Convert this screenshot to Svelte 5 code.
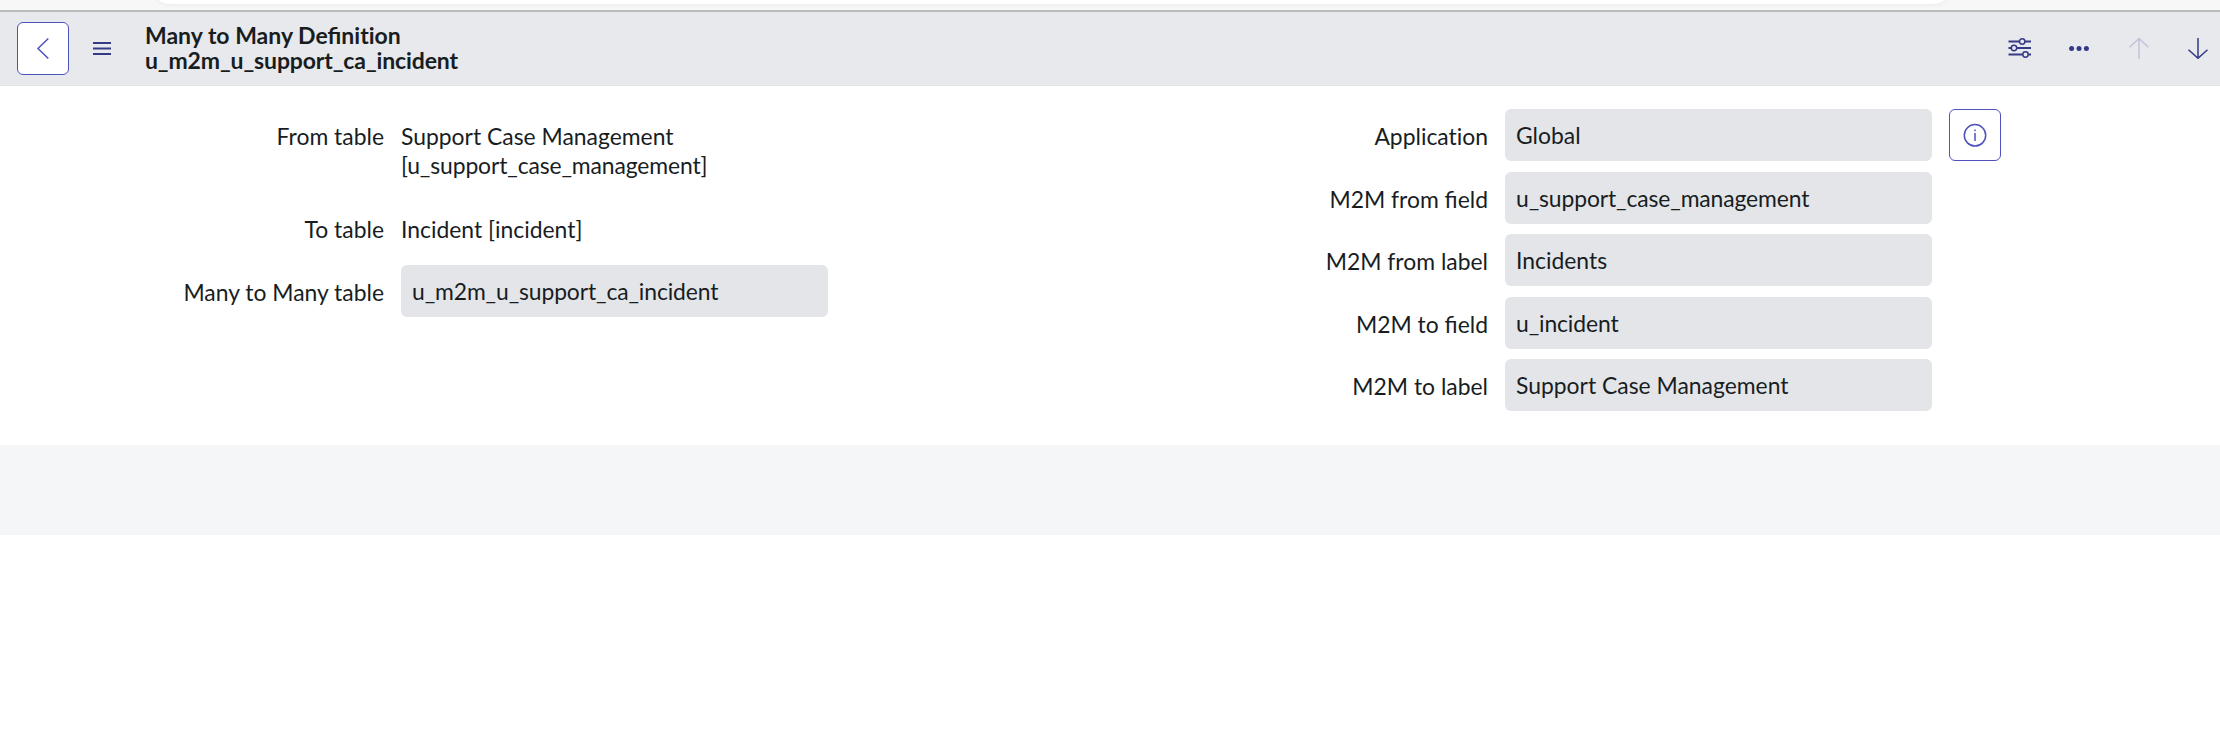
<script>
	let record = $state({
		name: 'u_m2m_u_support_ca_incident'
	});

	// Fields of the left form column
	const fromFields = [
		{ label: 'From table', lines: ['Support Case Management', '[u_support_case_management]'] },
		{ label: 'To table', lines: ['Incident [incident]'] },
		{ label: 'Many to Many table', value: 'u_m2m_u_support_ca_incident' }
	];

	// Fields of the right form column
	const m2mFields = [
		{ label: 'Application', value: 'Global', info: true },
		{ label: 'M2M from field', value: 'u_support_case_management' },
		{ label: 'M2M from label', value: 'Incidents' },
		{ label: 'M2M to field', value: 'u_incident' },
		{ label: 'M2M to label', value: 'Support Case Management' }
	];

	// Column and table names are set slightly tighter
	const isName = (text) => text.includes('_');
</script>

<div class="page">
	<div class="browser-edge">
		<div class="address-bar"></div>
	</div>

	<header class="form-header">
		<button class="btn-icon" aria-label="Back">
			<svg width="52" height="53" viewBox="0 0 52 53">
				<path d="M31.3 16.5 21 26.5l10.3 10" />
			</svg>
		</button>
		<button class="btn-plain menu" aria-label="Additional actions">
			<svg width="18" height="13" viewBox="0 0 18 13">
				<path d="M0 1h18M0 6.500h18M0 12h18" stroke-width="2" />
			</svg>
		</button>
		<h1 class="title">
			<span>Many to Many Defi<span class="no-liga">nition</span></span>
			<span class="name">{record.name}</span>
		</h1>
		<div class="actions">
			<button class="btn-plain" aria-label="Personalize form">
				<svg width="24" height="22" viewBox="0 0 24 22">
					<path d="M.5 4.500h10.800M17 4.500h6M.5 11h3M9 11h14M.5 17.500h14M20.500 17.500h2.500" stroke-width="1.900" />
					<circle cx="14.200" cy="4.500" r="2.700" />
					<circle cx="6" cy="11" r="2.700" />
					<circle cx="17.500" cy="17.500" r="2.700" />
				</svg>
			</button>
			<button class="btn-plain" aria-label="More options">
				<svg width="24" height="22" viewBox="0 0 24 22">
					<g class="dots">
						<circle cx="4.600" cy="11.500" r="2.500" />
						<circle cx="12" cy="11.500" r="2.500" />
						<circle cx="19.400" cy="11.500" r="2.500" />
					</g>
				</svg>
			</button>
			<button class="btn-plain disabled" aria-label="Previous record">
				<svg width="24" height="22" viewBox="0 0 24 22">
					<path d="M12 22V1.500M2.500 10.300 12 1.500l9.500 8.800" />
				</svg>
			</button>
			<button class="btn-plain" aria-label="Next record">
				<svg width="24" height="22" viewBox="0 0 24 22">
					<path d="M12 1v20M2.500 12.700 12 21.300l9.500-8.600" />
				</svg>
			</button>
		</div>
	</header>

	<main class="form">
		<div class="column">
			{#each fromFields as field}
				<div class="row" class:row-text={field.lines}>
					<span class="label">{field.label}</span>
					{#if field.lines}
						<div class="text-value">
							{#each field.lines as line}
								<div class:name={isName(line)}>{line}</div>
							{/each}
						</div>
					{:else}
						<div class="input" class:name={isName(field.value)}>{field.value}</div>
					{/if}
				</div>
			{/each}
		</div>
		<div class="column">
			{#each m2mFields as field}
				<div class="row">
					<span class="label" class:no-liga={field.info}>{field.label}</span>
					<div class="input" class:name={isName(field.value)}>{field.value}</div>
					{#if field.info}
						<button class="btn-icon info" aria-label="Preview record">
							<svg width="52" height="52" viewBox="0 0 52 52">
								<circle cx="26" cy="26.300" r="10.700" />
								<path d="M26 24v8M26 20.500v1.800" />
							</svg>
						</button>
					{/if}
				</div>
			{/each}
		</div>
	</main>

	<div class="related-bar"></div>
</div>

<style>
	:global(body) {
		background: #fff;
	}

	.page {
		height: 732px;
		overflow: hidden;
		font-family: Lato, 'Open Sans', sans-serif;
		font-size: 22.9px;
		line-height: 29px;
		color: #181d1f;
	}

	.browser-edge {
		height: 10px;
		background: #f7f7f7;
		border-bottom: 2px solid #bbbdbb;
		overflow: hidden;
	}

	.address-bar {
		width: 1803px;
		height: 40px;
		margin: -36px 0 0 150px;
		border-radius: 20px;
		background: #fff;
		box-shadow: 0 0 5px rgba(0, 0, 0, 0.08);
	}

	.form-header {
		display: flex;
		align-items: center;
		box-sizing: border-box;
		height: 74px;
		padding: 0 10px 0 17px;
		background: #e8e9ed;
		border-bottom: 1px solid #e1e3e6;
	}

	button {
		display: flex;
		align-items: center;
		justify-content: center;
		padding: 0;
		border: none;
		background: none;
		cursor: pointer;
	}

	svg {
		display: block;
		flex: none;
		fill: none;
		stroke: #343a85;
		stroke-width: 1.5;
	}

	.btn-icon {
		box-sizing: border-box;
		width: 52px;
		height: 53px;
		border: 1px solid #4f52bd;
		border-radius: 6px;
		background: #fff;
	}

	.btn-icon svg {
		stroke: #4f52bd;
	}

	.menu {
		margin: 0 0 1px 24px;
	}

	.title {
		display: flex;
		flex-direction: column;
		margin: 0 0 2px 34px;
		font-size: 23px;
		font-weight: 700;
		line-height: 25px;
	}

	.name {
		letter-spacing: -0.12px;
	}

	.no-liga {
		font-variant-ligatures: none;
	}

	.actions {
		display: flex;
		gap: 35.5px;
		margin: 0 0 1px auto;
	}

	.dots {
		fill: #343a85;
		stroke: none;
	}

	.disabled svg {
		stroke: #c2c3da;
	}

	.form {
		display: grid;
		grid-template-columns: 1104px 1fr;
		box-sizing: border-box;
		height: 359px;
		padding-top: 23px;
	}

	.column {
		display: flex;
		flex-direction: column;
		gap: 10.6px;
	}

	.row {
		display: flex;
		align-items: flex-start;
	}

	.row-text {
		padding-bottom: 11px;
	}

	.label {
		width: 384px;
		margin-right: 17px;
		padding-top: 13px;
		text-align: right;
	}

	.text-value {
		width: 427px;
		padding-top: 13px;
	}

	.input {
		box-sizing: border-box;
		width: 427px;
		height: 52px;
		padding: 12px 11px;
		border-radius: 6px;
		background: #e4e5e9;
	}

	.info {
		height: 52px;
		margin-left: 17px;
	}

	.related-bar {
		height: 90px;
		background: #f5f6f8;
	}
</style>
